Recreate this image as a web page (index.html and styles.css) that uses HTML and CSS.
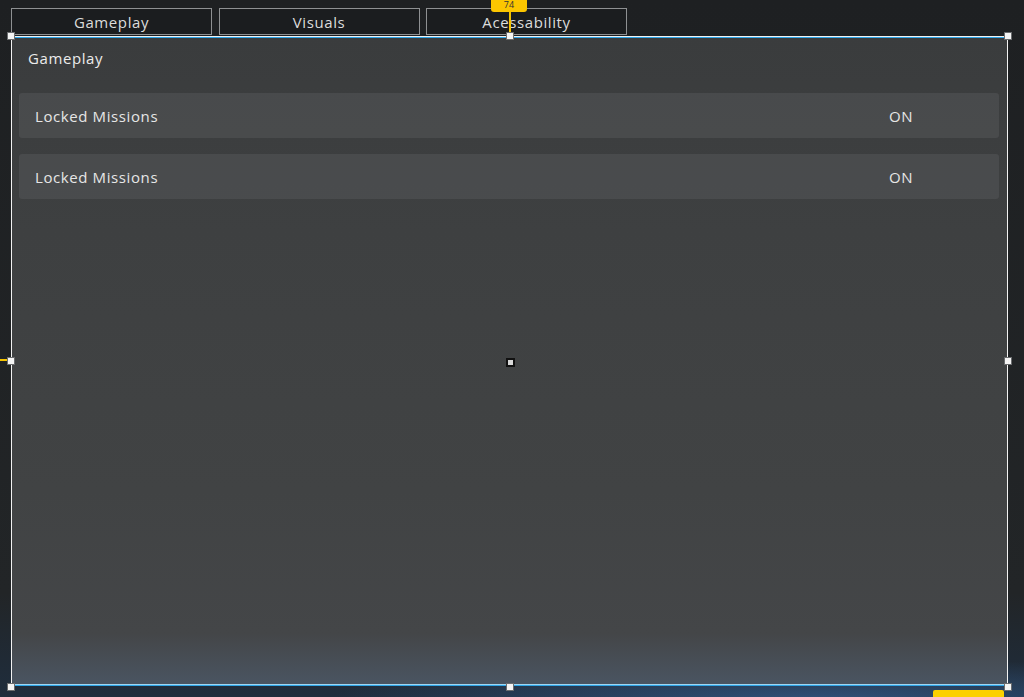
FILE: index.html
```html
<!DOCTYPE html>
<html>
<head>
<meta charset="utf-8">
<link rel="stylesheet" href="styles.css">
</head>
<body>
<div class="stage">
  <div class="tabs">
    <div class="tab">Gameplay</div>
    <div class="tab">Visuals</div>
    <div class="tab">Acessability</div>
  </div>
  <div class="panel">
    <div class="section-title">Gameplay</div>
    <div class="rows">
      <div class="row"><span class="label">Locked Missions</span><span class="value">ON</span></div>
      <div class="row"><span class="label">Locked Missions</span><span class="value">ON</span></div>
    </div>

    <div class="h h-tl"></div>
    <div class="h h-tm"></div>
    <div class="h h-tr"></div>
    <div class="h h-ml"></div>
    <div class="h h-mr"></div>
    <div class="h h-bl"></div>
    <div class="h h-bm"></div>
    <div class="h h-br"></div>
    <div class="pivot"></div>
    <div class="guide-top"></div>
    <div class="tag-top">74</div>
    <div class="guide-left"></div>
  </div>
  <div class="tag-bottom"></div>
</div>
</body>
</html>
```
FILE: styles.css
```css
html, body {
  margin: 0;
  padding: 0;
  width: 1024px;
  height: 697px;
  overflow: hidden;
}
body {
  background:
    radial-gradient(ellipse 700px 60px at 820px 700px, rgba(60,110,170,0.55), rgba(60,110,170,0) 70%),
    linear-gradient(180deg, #1e2022 0%, #222527 85%, #1f2d3d 100%);
  font-family: "Open Sans", "DejaVu Sans", sans-serif;
  color: #e6e6e6;
}
.stage {
  position: relative;
  width: 1024px;
  height: 697px;
  padding-top: 8px;
  box-sizing: border-box;
}
.tabs {
  display: flex;
  gap: 6.5px;
  padding-left: 11px;
  height: 27px;
}
.tab {
  width: 201px;
  height: 27px;
  box-sizing: border-box;
  border: 1px solid #8e9092;
  background: #1b1d1f;
  display: flex;
  align-items: center;
  justify-content: center;
  font-size: 15px;
  letter-spacing: 0.6px;
  color: #dcdcdc;
}
.panel {
  position: relative;
  margin-left: 11px;
  margin-top: 1px;
  width: 997px;
  height: 650px;
  border-left: 1px solid #f2f2f2;
  border-right: 1px solid #f2f2f2;
  box-sizing: border-box;
  background: linear-gradient(180deg, #3a3c3d 0%, #3e4041 30%, #414344 70%, #444648 92%, #4a5562 100%);
  box-shadow: inset 0 1px 0 #f2f2f2, inset 0 2px 0 #2fa6e8, inset 0 -1px 0 #2fa6e8, inset 0 -2px 0 #9fd6f2;
}
.section-title {
  padding: 12px 0 0 16px;
  height: 32px;
  font-size: 15px;
  letter-spacing: 0.6px;
  color: #ececec;
}
.rows {
  display: flex;
  flex-direction: column;
  gap: 16px;
  padding: 13px 8px 0 7px;
}
.row {
  height: 45px;
  background: rgba(84, 86, 87, 0.55);
  border-radius: 3px;
  display: flex;
  align-items: center;
  padding-left: 16px;
  font-size: 15px;
  letter-spacing: 0.6px;
  color: #e6e6e6;
}
.label {
  flex: 1;
}
.value {
  width: 110px;
}
.h {
  position: absolute;
  width: 6px;
  height: 6px;
  background: #f4f4f4;
  border: 1px solid #6a6c6e;
  z-index: 2;
}
.h-tl { left: -5px; top: -4px; }
.h-tm { left: 494px; top: -4px; }
.h-tr { right: -5px; top: -4px; }
.h-ml { left: -5px; top: 321px; }
.h-mr { right: -5px; top: 321px; }
.h-bl { left: -5px; bottom: -5px; }
.h-bm { left: 494px; bottom: -5px; }
.h-br { right: -5px; bottom: -5px; }
.pivot {
  position: absolute;
  left: 494px;
  top: 322px;
  width: 5px;
  height: 5px;
  background: #d8d8d8;
  border: 2px solid #111;
}
.guide-top {
  position: absolute;
  left: 497px;
  top: -26px;
  width: 2px;
  height: 23px;
  background: #f5c400;
}
.tag-top {
  position: absolute;
  left: 479px;
  top: -37px;
  width: 36px;
  height: 13px;
  background: #fcc600;
  border-radius: 0 0 3px 3px;
  color: #333;
  font-size: 9px;
  line-height: 11px;
  text-align: center;
}
.guide-left {
  position: absolute;
  left: -12px;
  top: 323px;
  width: 8px;
  height: 2px;
  background: #f5c400;
}
.tag-bottom {
  position: absolute;
  left: 933px;
  top: 690px;
  width: 71px;
  height: 10px;
  background: #fcd000;
  border-radius: 2px;
}
```
